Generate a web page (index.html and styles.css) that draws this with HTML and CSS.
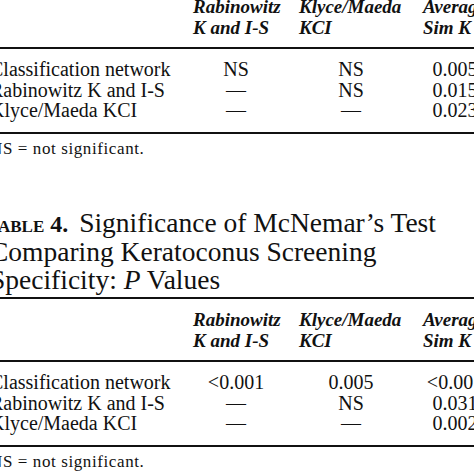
FILE: index.html
```html
<!DOCTYPE html>
<html lang="en">
<head>
<meta charset="utf-8">
<title>Table 4</title>
<link rel="stylesheet" href="styles.css">
</head>
<body>
<main class="page">
  <section class="tbl">
    <div class="thead cols">
      <div class="cell"></div>
      <div class="cell head">Rabinowitz<br>K and I-S</div>
      <div class="cell head">Klyce/Maeda<br>KCI</div>
      <div class="cell head">Average<br>Sim K</div>
    </div>
    <div class="tbody cols">
      <div class="cell label-col">Classification network</div>
      <div class="cell val">NS</div>
      <div class="cell val">NS</div>
      <div class="cell val">0.005</div>
      <div class="cell label-col">Rabinowitz K and I-S</div>
      <div class="cell val">—</div>
      <div class="cell val">NS</div>
      <div class="cell val">0.015</div>
      <div class="cell label-col">Klyce/Maeda KCI</div>
      <div class="cell val">—</div>
      <div class="cell val">—</div>
      <div class="cell val">0.023</div>
    </div>
  </section>
  <p class="note">NS = not significant.</p>

  <h2 class="title"><span class="tag">Table 4.</span> Significance of McNemar’s Test<br>Comparing Keratoconus Screening<br>Specificity: <i>P</i> Values</h2>

  <section class="tbl">
    <div class="thead cols">
      <div class="cell"></div>
      <div class="cell head">Rabinowitz<br>K and I-S</div>
      <div class="cell head">Klyce/Maeda<br>KCI</div>
      <div class="cell head">Average<br>Sim K</div>
    </div>
    <div class="tbody cols">
      <div class="cell label-col">Classification network</div>
      <div class="cell val">&lt;0.001</div>
      <div class="cell val">0.005</div>
      <div class="cell val">&lt;0.001</div>
      <div class="cell label-col">Rabinowitz K and I-S</div>
      <div class="cell val">—</div>
      <div class="cell val">NS</div>
      <div class="cell val">0.031</div>
      <div class="cell label-col">Klyce/Maeda KCI</div>
      <div class="cell val">—</div>
      <div class="cell val">—</div>
      <div class="cell val">0.002</div>
    </div>
  </section>
  <p class="note">NS = not significant.</p>
</main>
</body>
</html>
```

FILE: styles.css
```css
html, body {
  margin: 0;
  padding: 0;
  background: #ffffff;
  overflow: hidden;
}

body {
  width: 474px;
  height: 474px;
}

.page {
  margin: -4px 0 0 -10px;
  width: 540px;
  font-family: "Liberation Serif", "Times New Roman", serif;
  color: #111111;
}

.cols {
  display: grid;
  grid-template-columns: 183px 86px 104px 64px;
  column-gap: 20px;
}

.cell {
  white-space: nowrap;
}

.thead {
  font-size: 19px;
  line-height: 21px;
  font-weight: bold;
  font-style: italic;
  padding-bottom: 9px;
  border-bottom: 2px solid #111111;
}

.tbody {
  font-size: 20px;
  line-height: 20.5px;
  padding-top: 10px;
  padding-bottom: 11.5px;
  border-bottom: 2px solid #111111;
}

.val {
  text-align: center;
}

.note {
  margin: 5px 0 0 0;
  font-size: 17px;
  line-height: 20px;
  letter-spacing: 0.6px;
}

.title {
  margin: 50px 0 10px 0;
  padding-bottom: 3px;
  border-bottom: 2px solid #111111;
  font-size: 27.5px;
  line-height: 28px;
  font-weight: normal;
  white-space: nowrap;
  text-indent: -8px;
}

.tag {
  font-variant: small-caps;
  font-weight: bold;
  font-size: 24px;
  margin-right: 4px;
}
```
